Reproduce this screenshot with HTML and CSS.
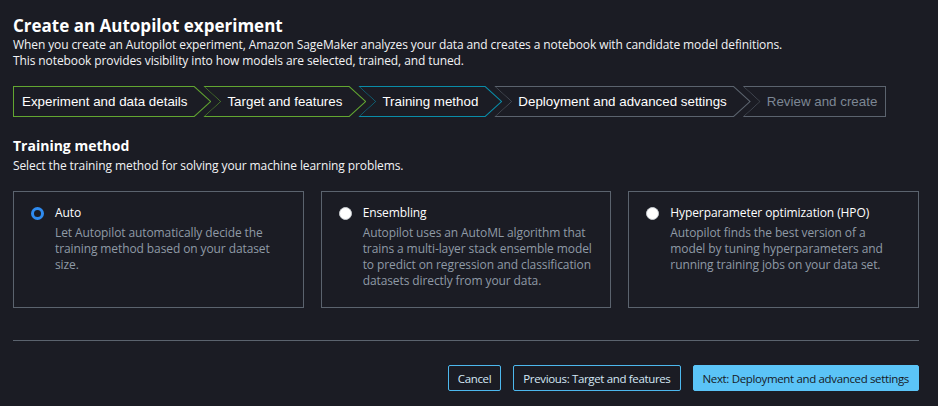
FILE: index.html
```html
<!DOCTYPE html>
<html>
<head>
<meta charset="utf-8">
<link rel="stylesheet" href="styles.css">
</head>
<body>
<main class="page">
  <h1 class="title">Create an Autopilot experiment</h1>
  <p class="intro">When you create an Autopilot experiment, Amazon SageMaker analyzes your data and creates a notebook with candidate model definitions.<br>This notebook provides visibility into how models are selected, trained, and tuned.</p>

  <nav class="steps">
    <div class="step step-first step-done"><span class="step-label">Experiment and data details</span></div>
    <div class="step step-done"><span class="step-label">Target and features</span></div>
    <div class="step step-current"><span class="step-label">Training method</span></div>
    <div class="step step-next"><span class="step-label">Deployment and advanced settings</span></div>
    <div class="step step-last step-disabled"><span class="step-label">Review and create</span></div>
  </nav>

  <h2 class="section-title">Training method</h2>
  <p class="section-desc">Select the training method for solving your machine learning problems.</p>

  <div class="cards">
    <label class="card">
      <span class="radio radio-checked"></span>
      <span class="card-body">
        <span class="card-label">Auto</span>
        <span class="card-desc">Let Autopilot automatically decide the training method based on your dataset size.</span>
      </span>
    </label>
    <label class="card">
      <span class="radio"></span>
      <span class="card-body">
        <span class="card-label">Ensembling</span>
        <span class="card-desc">Autopilot uses an AutoML algorithm that trains a multi-layer stack ensemble model to predict on regression and classification datasets directly from your data.</span>
      </span>
    </label>
    <label class="card">
      <span class="radio"></span>
      <span class="card-body">
        <span class="card-label">Hyperparameter optimization (HPO)</span>
        <span class="card-desc">Autopilot finds the best version of a model by tuning hyperparameters and running training jobs on your data set.</span>
      </span>
    </label>
  </div>

  <hr class="divider">

  <div class="actions">
    <button class="btn btn-outline">Cancel</button>
    <button class="btn btn-outline">Previous: Target and features</button>
    <button class="btn btn-primary">Next: Deployment and advanced settings</button>
  </div>
</main>
</body>
</html>
```
FILE: styles.css
```css
html, body {
  margin: 0;
  padding: 0;
  background: #1b1c24;
}
body {
  font-family: "Open Sans", "Noto Sans", sans-serif;
  color: #ffffff;
}
.page {
  padding: 15px 19px 0 13px;
}
.title {
  margin: 0;
  font-size: 17px;
  line-height: 22px;
  font-weight: 700;
}
.intro {
  margin: 0;
  font-size: 12px;
  line-height: 16px;
  letter-spacing: -0.1px;
  color: #f2f3f5;
}

/* breadcrumb steps */
.steps {
  display: flex;
  margin-top: 17px;
  height: 31px;
}
.step {
  position: relative;
  height: 31px;
  display: flex;
  align-items: center;
  padding: 0 24px;
  margin-left: -8px;
  background: #5b636e;
  font-family: "Liberation Sans", Arial, sans-serif;
  font-size: 13.35px;
  color: #ffffff;
  clip-path: polygon(0 0, calc(100% - 17px) 0, 100% 50%, calc(100% - 17px) 100%, 0 100%, 17px 50%);
}
.step::before {
  content: "";
  position: absolute;
  top: 1px;
  bottom: 1px;
  left: 1.5px;
  right: 1.5px;
  background: #1b1c24;
  clip-path: polygon(0 0, calc(100% - 16px) 0, 100% 50%, calc(100% - 16px) 100%, 0 100%, 16px 50%);
}
.step-label {
  position: relative;
  white-space: nowrap;
}
.step-first {
  margin-left: 0;
  padding-left: 9px;
  clip-path: polygon(0 0, calc(100% - 17px) 0, 100% 50%, calc(100% - 17px) 100%, 0 100%);
}
.step-first::before {
  left: 1px;
  clip-path: polygon(0 0, calc(100% - 16px) 0, 100% 50%, calc(100% - 16px) 100%, 0 100%);
}
.step-last {
  padding-right: 9px;
  clip-path: polygon(0 0, 100% 0, 100% 100%, 0 100%, 17px 50%);
}
.step-last::before {
  right: 1px;
  clip-path: polygon(0 0, 100% 0, 100% 100%, 0 100%, 16px 50%);
}
.step-done { background: #62a631; }
.step-current { background: #0a8ca8; }
.step-next { background: #5b636e; }
.step-disabled { background: #5b636e; color: #7d8794; }

/* section */
.section-title {
  margin: 19px 0 0;
  font-size: 14px;
  line-height: 20px;
  font-weight: 700;
}
.section-desc {
  margin: 2px 0 0;
  font-size: 12px;
  line-height: 16px;
  letter-spacing: -0.1px;
  color: #f2f3f5;
}

/* cards */
.cards {
  display: grid;
  grid-template-columns: repeat(3, 1fr);
  gap: 17px;
  margin-top: 17px;
}
.card {
  display: flex;
  gap: 11px;
  border: 1px solid #5b636e;
  padding: 13px 15px 18px 17px;
  min-height: 84px;
}
.radio {
  flex: none;
  width: 13px;
  height: 13px;
  margin-top: 1.5px;
  border-radius: 50%;
  box-sizing: border-box;
  background: #ffffff;
  border: 1px solid #c9cdd2;
}
.radio-checked {
  background: #1b1c24;
  border: 3.5px solid #2f8bf0;
}
.card-body {
  display: flex;
  flex-direction: column;
  font-size: 12px;
  line-height: 16px;
  letter-spacing: -0.1px;
}
.card-label {
  color: #ffffff;
  font-weight: 500;
}
.card-desc {
  margin-top: 4px;
  color: #8f9aa6;
}

.divider {
  border: 0;
  border-top: 1px solid #5b636e;
  margin: 32px 0 0;
}

/* buttons */
.actions {
  display: flex;
  justify-content: flex-end;
  gap: 12px;
  margin-top: 24px;
}
.btn {
  height: 26px;
  padding: 0 9px;
  border-radius: 2px;
  font-family: "Open Sans", "Noto Sans", sans-serif;
  font-size: 11.5px;
  font-weight: 500;
  letter-spacing: -0.35px;
  cursor: pointer;
}
.btn-outline {
  background: transparent;
  border: 1px solid #4db8ee;
  color: #d4e8f6;
}
.btn-primary {
  background: #5bc4f7;
  border: 1px solid #5bc4f7;
  color: #16191f;
}
```
